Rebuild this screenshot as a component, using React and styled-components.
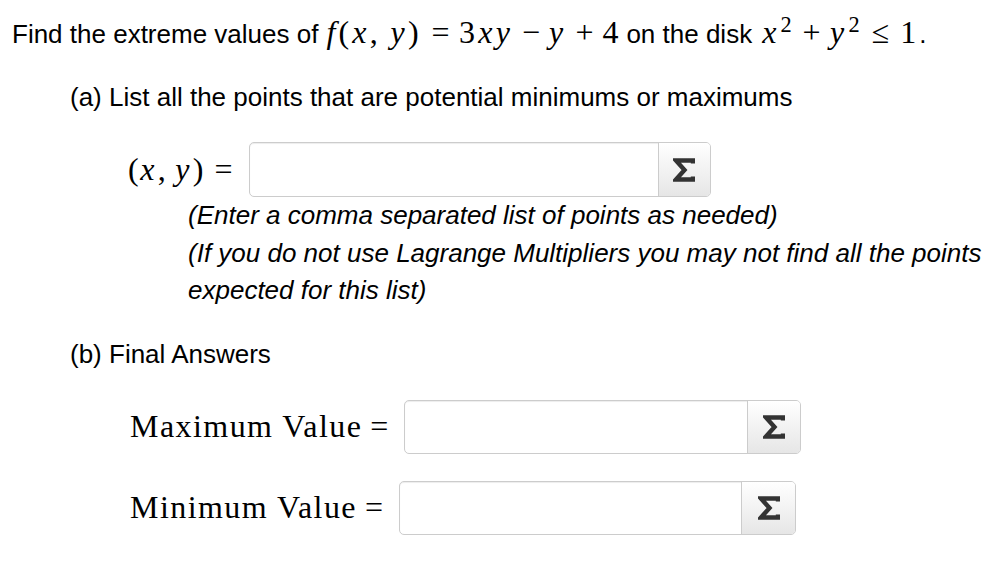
import React from "react";
import styled, { createGlobalStyle } from "styled-components";

const Global = createGlobalStyle`
  html, body { margin: 0; padding: 0; background: #fff; }
  body { font-family: "Liberation Sans", Arial, sans-serif; color: #000; }
`;

const Page = styled.div`
  width: 998px;
  height: 570px;
  overflow: hidden;
  box-sizing: border-box;
  padding: 16px 0 0 12px;
`;

const TextLine = styled.p`
  margin: ${(p) => p.$mt || 0}px 0 0 ${(p) => p.$indent || 0}px;
  font-size: 26px;
  line-height: 36px;
  height: 36px;
  white-space: nowrap;
`;

const Math = styled.span`
  font-family: "Liberation Serif", "Times New Roman", serif;
  font-size: ${(p) => p.$size || 32}px;
  letter-spacing: 0.1em;
  line-height: 0;
  white-space: nowrap;
  margin: 0 ${(p) => p.$right ?? 8}px 0 ${(p) => p.$left ?? 8}px;
`;

const V = styled.i`
  font-style: italic;
  letter-spacing: 0.1em;
`;

const Num = styled.span`
  letter-spacing: ${(p) => (p.$last ? 0 : 0.1)}em;
`;

const Up = styled.span`
  letter-spacing: 0.045em;
`;

const Op = styled.span`
  display: inline-block;
  letter-spacing: 0;
  margin: 0 ${(p) => (p.$end ? 0 : p.$space || 0.3)}em 0
    ${(p) => p.$space || 0.3}em;
`;

const Sup = styled.sup`
  font-size: 0.7em;
  vertical-align: 0.5em;
  line-height: 0;
  font-style: normal;
  letter-spacing: 0.05em;
  margin-left: 1px;
`;

const Row = styled.div`
  display: flex;
  align-items: center;
  gap: 16px;
  margin: ${(p) => p.$mt || 0}px 0 0 ${(p) => p.$indent || 0}px;
`;

const Label = styled.span`
  font-family: "Liberation Serif", "Times New Roman", serif;
  font-size: 32px;
  letter-spacing: ${(p) => p.$ls || 0}em;
  white-space: nowrap;
`;

const Field = styled.div`
  display: flex;
  flex: none;
  width: ${(p) => p.$w}px;
  height: ${(p) => p.$h || 54}px;
  box-sizing: border-box;
  border: 1px solid #ccc;
  border-radius: 5px;
  background: #fff;
  box-shadow: inset 0 1px 1px rgba(0, 0, 0, 0.075);
  overflow: hidden;
`;

const FieldInput = styled.input`
  flex: 1;
  min-width: 0;
  border: none;
  outline: none;
  background: transparent;
  font-size: 18px;
  padding: 0 10px;
`;

const SigmaButton = styled.button`
  width: ${(p) => p.$w || 52}px;
  border: none;
  border-left: 1px solid #ccc;
  background: linear-gradient(#ffffff, #e6e6e6);
  display: flex;
  align-items: center;
  justify-content: center;
  padding: 0;
  cursor: pointer;
`;

const Notes = styled.div`
  margin: 0 0 0 ${(p) => p.$indent}px;
  font-size: 26px;
  line-height: 37.5px;
  font-style: italic;
  color: #000;
  white-space: nowrap;
`;

const Sigma = () => (
  <svg width="22" height="24" viewBox="0 0 22 24">
    <path
      d="M20 5.5 V2.5 H3 L11.5 12 L3 21.5 H20 V18.5"
      fill="none"
      stroke="#333"
      strokeWidth="4.4"
      strokeLinejoin="miter"
      strokeMiterlimit="3"
    />
  </svg>
);

const AnswerField = ({ w, h, bw }) => (
  <Field $w={w} $h={h}>
    <FieldInput type="text" />
    <SigmaButton $w={bw} type="button">
      <Sigma />
    </SigmaButton>
  </Field>
);

export default function App() {
  return (
    <Page>
      <Global />
      <TextLine>
        Find the extreme values of
        <Math $left={8} $right={8}>
          <V>f</V>(<V>x</V>,&thinsp;<V>y</V>)<Op>=</Op>
          <Num>3</Num>
          <V>xy</V>
          <Op $space={0.28}>−</Op>
          <V>y</V>
          <Op $space={0.28}>+</Op>
          <Num $last>4</Num>
        </Math>
        on the disk
        <Math $left={10} $right={3}>
          <V>x</V>
          <Sup>2</Sup>
          <Op $space={0.3}>+</Op>
          <V>y</V>
          <Sup>2</Sup>
          <Op $space={0.34}>≤</Op>
          <Num $last>1</Num>
        </Math>
        .
      </TextLine>

      <TextLine $mt={27} $indent={58}>
        (a) List all the points that are potential minimums or maximums
      </TextLine>

      <Row $mt={27} $indent={116}>
        <Label $ls={0.05}>
          (<V>x</V>,&thinsp;<V>y</V>)
          <Op $space={0.3} $end>
            =
          </Op>
        </Label>
        <AnswerField w={462} h={55} bw={52} />
      </Row>

      <Notes $indent={176}>
        (Enter a comma separated list of points as needed)
        <br />
        (If you do not use Lagrange Multipliers you may not find all the points
        <br />
        expected for this list)
      </Notes>

      <TextLine $mt={26} $indent={58}>
        (b) Final Answers
      </TextLine>

      <Row $mt={28} $indent={118}>
        <Label>
          <Up>Maximum Value</Up>
          <Op $space={0.25} $end>
            =
          </Op>
        </Label>
        <AnswerField w={397} h={54} bw={53} />
      </Row>

      <Row $mt={27} $indent={118}>
        <Label>
          <Up>Minimum Value</Up>
          <Op $space={0.25} $end>
            =
          </Op>
        </Label>
        <AnswerField w={397} h={54} bw={54} />
      </Row>
    </Page>
  );
}
